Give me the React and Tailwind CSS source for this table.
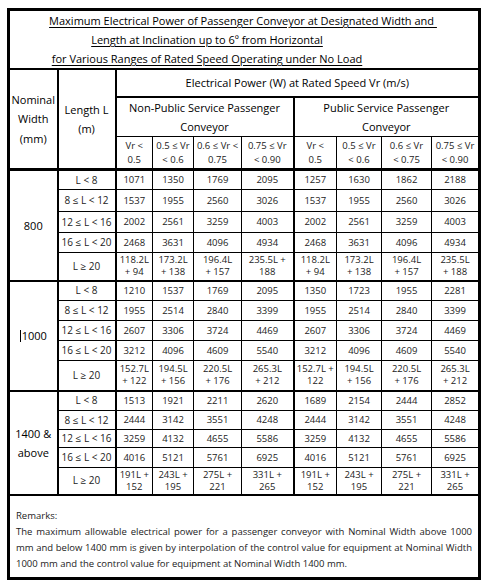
const font = { fontFamily: '"Open Sans", "Noto Sans", sans-serif' }

const vrHeads = [
  ['Vr <\n0.5', '0.5 ≤ Vr\n< 0.6', '0.6 ≤ Vr <\n0.75', '0.75 ≤ Vr\n< 0.90'],
  ['Vr <\n0.5', '0.5 ≤ Vr\n< 0.6', '0.6 ≤ Vr\n< 0.75', '0.75 ≤ Vr\n< 0.90'],
]

const lengths = ['L < 8', '8 ≤ L < 12', '12 ≤ L < 16', '16 ≤ L < 20', 'L ≥ 20']

const sections = [
  {
    width: '800',
    heights: ['h-[20px]', 'h-[22px]', 'h-[21px]', 'h-[20px]', 'h-[28px]'],
    rows: [
      ['1071', '1350', '1769', '2095', '1257', '1630', '1862', '2188'],
      ['1537', '1955', '2560', '3026', '1537', '1955', '2560', '3026'],
      ['2002', '2561', '3259', '4003', '2002', '2561', '3259', '4003'],
      ['2468', '3631', '4096', '4934', '2468', '3631', '4096', '4934'],
      ['118.2L\n+ 94', '173.2L\n+ 138', '196.4L\n+ 157', '235.5L +\n188', '118.2L\n+ 94', '173.2L\n+ 138', '196.4L\n+ 157', '235.5L\n+ 188'],
    ],
  },
  {
    width: '1000',
    cursor: true,
    heights: ['h-[20px]', 'h-[20px]', 'h-[20px]', 'h-[20px]', 'h-[30px]'],
    rows: [
      ['1210', '1537', '1769', '2095', '1350', '1723', '1955', '2281'],
      ['1955', '2514', '2840', '3399', '1955', '2514', '2840', '3399'],
      ['2607', '3306', '3724', '4469', '2607', '3306', '3724', '4469'],
      ['3212', '4096', '4609', '5540', '3212', '4096', '4609', '5540'],
      ['152.7L\n+ 122', '194.5L\n+ 156', '220.5L\n+ 176', '265.3L\n+ 212', '152.7L +\n122', '194.5L\n+ 156', '220.5L\n+ 176', '265.3L\n+ 212'],
    ],
  },
  {
    width: '1400 &\nabove',
    heights: ['h-[20px]', 'h-[19px]', 'h-[18px]', 'h-[20px]', 'h-[27px]'],
    rows: [
      ['1513', '1921', '2211', '2620', '1689', '2154', '2444', '2852'],
      ['2444', '3142', '3551', '4248', '2444', '3142', '3551', '4248'],
      ['3259', '4132', '4655', '5586', '3259', '4132', '4655', '5586'],
      ['4016', '5121', '5761', '6925', '4016', '5121', '5761', '6925'],
      ['191L +\n152', '243L +\n195', '275L +\n221', '331L +\n265', '191L +\n152', '243L +\n195', '275L +\n221', '331L +\n265'],
    ],
  },
]

const cell = 'border border-black text-center align-middle p-0'

function Section({ data }) {
  return data.rows.map((row, r) => {
    const last = r === data.rows.length - 1
    return (
      <tr key={r} className={data.heights[r]}>
        {r === 0 && (
          <td rowSpan={5} className={`${cell} border-r-2 border-b-2 whitespace-pre-line text-[11px] leading-[19px] text-black`}>
            {data.cursor && <span className="mr-px inline-block h-[12px] w-px bg-black align-[-2px]" />}
            {data.width}
          </td>
        )}
        <td className={`${cell} border-r-2 text-[10px] ${last ? 'border-b-2' : ''}`}>{lengths[r]}</td>
        {row.map((v, i) => (
          <td
            key={i}
            className={`${cell} whitespace-pre-line text-[9.5px] leading-[12px] ${i === 3 ? 'border-r-2' : ''} ${last ? 'border-b-2' : ''}`}
          >
            {v}
          </td>
        ))}
      </tr>
    )
  })
}

export default function App() {
  const cols = ['w-[49px]', 'w-[58px]', 'w-[37px]', 'w-[41px]', 'w-[48px]', 'w-[52px]', 'w-[43px]', 'w-[45px]', 'w-[50px]', 'w-[48px]']
  return (
    <div className="min-h-[585px] bg-white pl-[7px] pt-[8px] text-[#222]" style={font}>
      <table className="w-[471px] table-fixed border-collapse border-[3px] border-black">
        <colgroup>
          {cols.map((c, i) => (
            <col key={i} className={c} />
          ))}
        </colgroup>
        <tbody>
          <tr className="h-[58px]">
            <td colSpan={10} className="border-b-2 border-black p-0 text-[11px] leading-[19px] text-black underline underline-offset-2">
              <div className="pr-[2px] text-center">Maximum Electrical Power of Passenger Conveyor at Designated Width and&nbsp;</div>
              <div className="pr-[74px] text-center">Length at Inclination up to 6º from Horizontal</div>
              <div className="pr-[74px] text-center">for Various Ranges of Rated Speed Operating under No Load</div>
            </td>
          </tr>
          <tr className="h-[28px]">
            <td rowSpan={3} className={`${cell} border-r-2 border-b-[3px] text-[11px] leading-[19.5px] text-black`}>
              Nominal
              <br />
              Width
              <br />
              (mm)
            </td>
            <td rowSpan={3} className={`${cell} border-r-2 border-b-[3px] text-[11px] leading-[19.5px] text-black`}>
              Length L
              <br />
              (m)
            </td>
            <td colSpan={8} className={`${cell} border-b-2 text-[11px] text-black`}>
              Electrical Power (W) at Rated Speed Vr (m/s)
            </td>
          </tr>
          <tr className="h-[39px]">
            <td colSpan={4} className={`${cell} border-r-2 text-[11px] leading-[19px] text-black`}>
              Non-Public Service Passenger
              <br />
              Conveyor
            </td>
            <td colSpan={4} className={`${cell} text-[11px] leading-[19px] text-black`}>
              Public Service Passenger
              <br />
              Conveyor
            </td>
          </tr>
          <tr className="h-[33px]">
            {[...vrHeads[0], ...vrHeads[1]].map((v, i) => (
              <td
                key={i}
                className={`${cell} border-b-[3px] whitespace-pre-line text-[9.5px] leading-[14px] ${i === 3 ? 'border-r-2' : ''}`}
              >
                {v}
              </td>
            ))}
          </tr>
          {sections.map((s, i) => (
            <Section key={i} data={s} />
          ))}
          <tr className="h-[84px]">
            <td colSpan={10} className="border-t-2 border-black px-[6px] pt-[12px] pb-[5px] align-top text-[9.5px] leading-[16px]">
              <p>Remarks:</p>
              <p className="text-justify [text-align-last:justify]">
                The maximum allowable electrical power for a passenger conveyor with Nominal Width above 1000
              </p>
              <p className="text-justify [text-align-last:justify]">
                mm and below 1400 mm is given by interpolation of the control value for equipment at Nominal Width
              </p>
              <p>1000 mm and the control value for equipment at Nominal Width 1400 mm.</p>
            </td>
          </tr>
        </tbody>
      </table>
    </div>
  )
}
